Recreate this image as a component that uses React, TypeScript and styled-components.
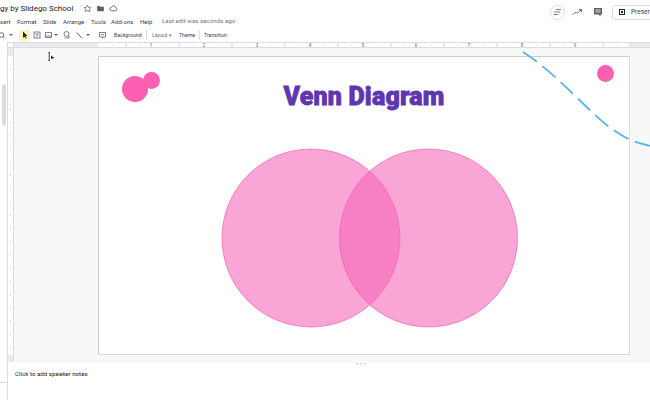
import React from 'react';
import styled, { createGlobalStyle } from 'styled-components';

const GlobalStyle = createGlobalStyle`
    html, body {
        margin: 0;
        padding: 0;
        background: #fff;
    }
`;

const Page = styled.div`
    position: relative;
    display: flex;
    flex-direction: column;
    width: 650px;
    height: 400px;
    overflow: hidden;
    font-family: 'Roboto', 'Liberation Sans', sans-serif;
    color: #3c4043;
`;

const Header = styled.header`
    display: flex;
    justify-content: space-between;
    height: 28px;
`;

const HeaderLeft = styled.div`
    display: flex;
    flex-direction: column;
`;

const TitleRow = styled.div`
    display: flex;
    align-items: center;
    height: 14px;
    padding-top: 1px;
`;

const DocTitle = styled.span`
    width: 80px;
    font-size: 8px;
    color: #202124;
    white-space: nowrap;
`;

const TitleIcons = styled.div`
    display: flex;
    gap: 4px;
    margin-left: 3px;
    color: #5f6368;
`;

const MenuRow = styled.nav`
    display: flex;
    align-items: center;
    height: 12px;
    font-size: 6.1px;
    white-space: nowrap;
`;

const MenuItem = styled.span<{ $width: number }>`
    width: ${(p) => p.$width}px;
    color: #3c4043;
`;

const LastEdit = styled.span`
    margin-left: 4px;
    color: #70757a;
    font-size: 6.2px;
`;

const HeaderRight = styled.div`
    display: flex;
    align-items: center;
    height: 24px;
    margin-right: -17px;
`;

const HistoryBadge = styled.div`
    display: flex;
    align-items: center;
    justify-content: center;
    box-sizing: border-box;
    width: 15px;
    height: 15px;
    border: 1px solid #dadce0;
    border-radius: 50%;
    margin-right: 7px;
`;

const ChartAction = styled.div`
    display: flex;
    margin-right: 11px;
`;

const CommentAction = styled.div`
    display: flex;
    margin-right: 9px;
`;

const PresentButton = styled.div`
    display: flex;
    align-items: center;
    gap: 6px;
    box-sizing: border-box;
    width: 55px;
    height: 15px;
    padding-left: 6px;
    border: 1px solid #dadce0;
    border-radius: 3px;
    font-size: 6.5px;
    color: #3c4043;
`;

const Toolbar = styled.div`
    display: flex;
    align-items: center;
    height: 14px;
    color: #5f6368;
    font-size: 5.2px;
    white-space: nowrap;
`;

const ToolSlot = styled.span<{ $width: number; $before?: number; $active?: boolean }>`
    display: flex;
    align-items: center;
    justify-content: center;
    width: ${(p) => p.$width}px;
    height: 11px;
    margin-left: ${(p) => p.$before ?? 0}px;
    border-radius: 1px;
    background: ${(p) => (p.$active ? '#feefc3' : 'transparent')};
    color: ${(p) => (p.$active ? '#202124' : 'inherit')};
`;

const ToolLabel = styled.span<{ $width: number; $before?: number; $blue?: boolean }>`
    width: ${(p) => p.$width}px;
    margin-left: ${(p) => p.$before ?? 0}px;
    color: ${(p) => (p.$blue ? '#5f6f8f' : '#3c4043')};
`;

const ToolDivider = styled.span`
    width: 1px;
    height: 10px;
    background: #dadce0;
`;

const Caret = styled.span`
    width: 0;
    height: 0;
    border-left: 2px solid transparent;
    border-right: 2px solid transparent;
    border-top: 2px solid #5f6368;
`;

const Editor = styled.div`
    display: flex;
    flex: 1;
    min-height: 0;
`;

const Filmstrip = styled.aside`
    display: flex;
    flex-direction: column;
    width: 7px;
    border-right: 1px solid #dadce0;
`;

const FilmstripPane = styled.div`
    height: 341px;
    padding: 42px 1px 0 2px;
    box-sizing: border-box;
    border-bottom: 1px solid #dadce0;
`;

const ScrollThumb = styled.div`
    width: 4px;
    height: 42px;
    border-radius: 2px;
    background: #dadce0;
`;

const Workspace = styled.main`
    display: flex;
    flex: 1;
    flex-direction: column;
    min-width: 0;
`;

const RulerRow = styled.div`
    height: 4px;
    border-top: 1px solid #dadce0;
    border-bottom: 1px solid #dadce0;
    background: #e8eaed;
    display: flex;
    flex: none;
`;

const RulerCorner = styled.div`
    width: 5px;
    background: #fff;
    border-right: 1px solid #dadce0;
`;

const RulerStrip = styled.svg`
    display: block;
    margin-left: 84px;
    width: 531px;
    height: 4px;
    background: #fff;
`;

const CanvasRow = styled.div`
    display: flex;
    height: 314px;
    flex: none;
`;

const SideRuler = styled.div`
    width: 5px;
    padding-top: 8px;
    border-right: 1px solid #dadce0;
    background: #e8eaed;
    flex: none;
`;

const SideRulerStrip = styled.svg`
    display: block;
    width: 5px;
    height: 299px;
    background: #fff;
`;

const Canvas = styled.div`
    flex: 1;
    padding: 8px 0 0 84px;
    background: #f8f8f9;
`;

const Slide = styled.section`
    position: relative;
    display: flex;
    flex-direction: column;
    align-items: center;
    box-sizing: border-box;
    width: 532px;
    height: 299px;
    background: #fff;
    border: 1px solid #dcdcde;
    border-top-color: #cdcdcf;
    border-left-color: #cdcdcf;
`;

const SlideTitle = styled.h1`
    margin: 23px 0 0;
    font-family: 'Roboto', 'Liberation Sans', sans-serif;
    font-size: 25px;
    line-height: 34px;
    font-weight: 900;
    letter-spacing: 0.2px;
    color: #5d36b0;
    -webkit-text-stroke: 0.8px #5d36b0;
    white-space: nowrap;
`;

const Venn = styled.svg`
    display: block;
    width: 300px;
    height: 182px;
    margin: 34px 0 0 14px;
`;

const Blob = styled.span<{ $size: number; $left: number; $top: number }>`
    position: absolute;
    left: ${(p) => p.$left}px;
    top: ${(p) => p.$top}px;
    width: ${(p) => p.$size}px;
    height: ${(p) => p.$size}px;
    border-radius: 50%;
    background: #fd5fb2;
`;

const Notes = styled.div`
    position: relative;
    flex: 1;
    padding: 8px 0 0 7px;
    font-size: 6.2px;
    color: #202124;
`;

const NotesHandle = styled.span`
    position: absolute;
    left: 348px;
    top: 1px;
    width: 9px;
    height: 1px;
    background: repeating-linear-gradient(90deg, #c4c7c9 0 2px, transparent 2px 4px);
`;

const Curve = styled.svg`
    position: absolute;
    left: 0;
    top: 0;
    width: 650px;
    height: 400px;
    pointer-events: none;
`;

const MousePointer = styled.svg`
    position: absolute;
    left: 48px;
    top: 52px;
    width: 7px;
    height: 9px;
`;

const hNumbers = [1, 2, 3, 4, 5, 6, 7, 8, 9];
const step = 13.25;

const HorizontalTicks = () => {
    const dots = Array.from({ length: 40 }, (_, i) => i);
    return (
        <RulerStrip viewBox="0 0 531 4">
            {dots.map((i) => {
                const x = i * step + 1;
                if (i % 4 === 0) return null;
                return i % 2 === 0 ? (
                    <rect key={i} x={x} y={0.5} width={1} height={3} fill="#c4c6c9" />
                ) : (
                    <rect key={i} x={x} y={1.5} width={1} height={1} fill="#c4c6c9" />
                );
            })}
            {hNumbers.map((n) => (
                <text key={n} x={53 + (n - 1) * 53} y={4} fontSize="4.5" textAnchor="middle" fill="#5f6368" fontFamily="Roboto, sans-serif">
                    {n}
                </text>
            ))}
        </RulerStrip>
    );
};

const VerticalTicks = () => {
    const dots = Array.from({ length: 22 }, (_, i) => i);
    return (
        <SideRulerStrip viewBox="0 0 5 299">
            {dots.map((i) => (
                <rect key={i} x={2} y={13 + i * step} width={1} height={1} fill={i === 3 ? '#c9a58f' : '#c4c6c9'} />
            ))}
        </SideRulerStrip>
    );
};

const StarIcon = () => (
    <svg width="9" height="9" viewBox="0 0 24 24" fill="none" stroke="currentColor" strokeWidth="2">
        <path d="M12 3l2.8 6 6.5.7-4.8 4.4 1.3 6.400L12 17.300 6.200 20.500l1.300-6.400L2.700 9.700 9.200 9z" />
    </svg>
);

const FolderIcon = () => (
    <svg width="9" height="9" viewBox="0 0 24 24" fill="currentColor">
        <path d="M3 5h7l2 2h9v12H3z" />
    </svg>
);

const CloudIcon = () => (
    <svg width="9" height="9" viewBox="0 0 24 24" fill="none" stroke="currentColor" strokeWidth="2.400">
        <path d="M7 18h10a4 4 0 0 0 1-7.900A6 6 0 0 0 6.500 9 4.500 4.500 0 0 0 7 18z" />
    </svg>
);

const HistoryIcon = () => (
    <svg width="9" height="8" viewBox="0 0 9 8" stroke="#8a7a7f" strokeWidth="1">
        <path d="M3 1.500h5M1 4h6M0.500 6.500h4.500" />
    </svg>
);

const TrendIcon = () => (
    <svg width="10" height="7" viewBox="0 0 10 7" fill="none" stroke="#5f6368" strokeWidth="0.900">
        <path d="M0.500 6l3-3 1.500 1.500L9 1" />
        <path d="M7 0.500h2.500V3" fill="#5f6368" />
    </svg>
);

const CommentIcon = () => (
    <svg width="10" height="10" viewBox="0 0 10 10">
        <path d="M1 1h8v6.500H7.500V9.500L5.500 7.500H1z" fill="#5f6368" />
        <path d="M2.500 3h5M2.500 5h5" stroke="#fff" strokeWidth="0.800" />
    </svg>
);

const PresentIcon = () => (
    <svg width="6" height="6" viewBox="0 0 6 6" fill="none">
        <rect x="0.500" y="0.500" width="5" height="5" stroke="#202124" />
        <rect x="2" y="2" width="2" height="2" fill="#202124" />
    </svg>
);

const SearchIcon = () => (
    <svg width="7" height="7" viewBox="0 0 7 7" fill="none" stroke="#5f6368" strokeWidth="0.900">
        <circle cx="1.500" cy="3" r="2.300" />
        <path d="M3.200 4.700L5 6.500" />
    </svg>
);

const CursorIcon = () => (
    <svg width="6" height="8" viewBox="0 0 6 8">
        <path d="M1 0.500v6.500l1.500-1.500 1 2 1-0.500-1-2h2z" fill="#202124" />
    </svg>
);

const TextBoxIcon = () => (
    <svg width="8" height="8" viewBox="0 0 8 8" fill="none" stroke="#5f6368" strokeWidth="0.800">
        <rect x="1" y="1" width="6" height="6" />
        <path d="M2.500 3h3M4 3v3" />
    </svg>
);

const ImageIcon = () => (
    <svg width="7" height="7" viewBox="0 0 7 7" fill="none" stroke="#5f6368" strokeWidth="0.800">
        <path d="M0.500 0.500h6v5h-6z" />
        <path d="M1 5l2-1.500 1.500 1 2-1" />
    </svg>
);

const ShapeIcon = () => (
    <svg width="7" height="8" viewBox="0 0 7 8" fill="none" stroke="#5f6368" strokeWidth="0.800">
        <circle cx="3.500" cy="3" r="2.500" />
        <path d="M1.500 7h4.500V4.500" />
    </svg>
);

const LineIcon = () => (
    <svg width="7" height="7" viewBox="0 0 7 7" stroke="#5f6368" strokeWidth="0.900">
        <path d="M0.500 0.500L6.500 6.500" />
    </svg>
);

const AddCommentIcon = () => (
    <svg width="7" height="7" viewBox="0 0 7 7" fill="none" stroke="#5f6368" strokeWidth="0.800">
        <path d="M0.500 0.500h6v4.500H0.500zM3.500 5v1.500" />
        <path d="M2 2.700h3" />
    </svg>
);

const App: React.FC = () => {
    return (
        <Page>
            <GlobalStyle />
            <Header>
                <HeaderLeft>
                    <TitleRow>
                        <DocTitle>gy by Slidego School</DocTitle>
                        <TitleIcons>
                            <StarIcon />
                            <FolderIcon />
                            <CloudIcon />
                        </TitleIcons>
                    </TitleRow>
                    <MenuRow>
                        <MenuItem $width={17}>sert</MenuItem>
                        <MenuItem $width={26}>Format</MenuItem>
                        <MenuItem $width={20}>Slide</MenuItem>
                        <MenuItem $width={28}>Arrange</MenuItem>
                        <MenuItem $width={20}>Tools</MenuItem>
                        <MenuItem $width={29}>Add-ons</MenuItem>
                        <MenuItem $width={18}>Help</MenuItem>
                        <LastEdit>Last edit was seconds ago</LastEdit>
                    </MenuRow>
                </HeaderLeft>
                <HeaderRight>
                    <HistoryBadge>
                        <HistoryIcon />
                    </HistoryBadge>
                    <ChartAction>
                        <TrendIcon />
                    </ChartAction>
                    <CommentAction>
                        <CommentIcon />
                    </CommentAction>
                    <PresentButton>
                        <PresentIcon />
                        Present
                    </PresentButton>
                </HeaderRight>
            </Header>
            <Toolbar>
                <ToolSlot $width={7}>
                    <SearchIcon />
                </ToolSlot>
                <ToolSlot $width={8}>
                    <Caret />
                </ToolSlot>
                <ToolSlot $width={11} $before={4} $active>
                    <CursorIcon />
                </ToolSlot>
                <ToolSlot $width={10} $before={2}>
                    <TextBoxIcon />
                </ToolSlot>
                <ToolSlot $width={9} $before={2}>
                    <ImageIcon />
                </ToolSlot>
                <ToolSlot $width={6}>
                    <Caret />
                </ToolSlot>
                <ToolSlot $width={10} $before={2}>
                    <ShapeIcon />
                </ToolSlot>
                <ToolSlot $width={9} $before={4}>
                    <LineIcon />
                </ToolSlot>
                <ToolSlot $width={6} $before={1}>
                    <Caret />
                </ToolSlot>
                <ToolSlot $width={10} $before={6}>
                    <AddCommentIcon />
                </ToolSlot>
                <ToolLabel $width={32} $before={7}>
                    Background
                </ToolLabel>
                <ToolDivider />
                <ToolLabel $width={27} $before={5} $blue>
                    Layout ▾
                </ToolLabel>
                <ToolLabel $width={20}>Theme</ToolLabel>
                <ToolDivider />
                <ToolLabel $width={26} $before={4}>
                    Transition
                </ToolLabel>
            </Toolbar>
            <Editor>
                <Filmstrip>
                    <FilmstripPane>
                        <ScrollThumb />
                    </FilmstripPane>
                </Filmstrip>
                <Workspace>
                    <RulerRow>
                        <RulerCorner />
                        <HorizontalTicks />
                    </RulerRow>
                    <CanvasRow>
                        <SideRuler>
                            <VerticalTicks />
                        </SideRuler>
                        <Canvas>
                            <Slide>
                                <Blob $size={26} $left={23} $top={19} />
                                <Blob $size={17} $left={44} $top={15} />
                                <Blob $size={17} $left={498} $top={8} />
                                <SlideTitle>Venn Diagram</SlideTitle>
                                <Venn viewBox="0 0 300 182">
                                    <circle cx="90" cy="90" r="89" fill="#f564b7" fillOpacity="0.58" stroke="#f45fae" strokeWidth="0.700" />
                                    <circle cx="207.500" cy="90" r="89" fill="#f564b7" fillOpacity="0.58" stroke="#f45fae" strokeWidth="0.700" />
                                </Venn>
                            </Slide>
                        </Canvas>
                    </CanvasRow>
                    <Notes>
                        <NotesHandle />
                        Click to add speaker notes
                    </Notes>
                </Workspace>
            </Editor>
            <Curve viewBox="0 0 650 400">
                <path
                    d="M523 52 C 560 76, 590 114, 612 129 S 638 142 650 146"
                    fill="none"
                    stroke="#5ab4e8"
                    strokeWidth="1.800"
                    strokeDasharray="17 7"
                />
            </Curve>
            <MousePointer viewBox="0 0 7 9">
                <path d="M0.500 0.500h1.500M1.200 0.500v8M0.500 8.500h1.500" stroke="#2b2b3a" strokeWidth="0.900" fill="none" />
                <path d="M3 3.500l3.500 2.500-3.500 1z" fill="#2b2b3a" />
            </MousePointer>
        </Page>
    );
};

export default App;
